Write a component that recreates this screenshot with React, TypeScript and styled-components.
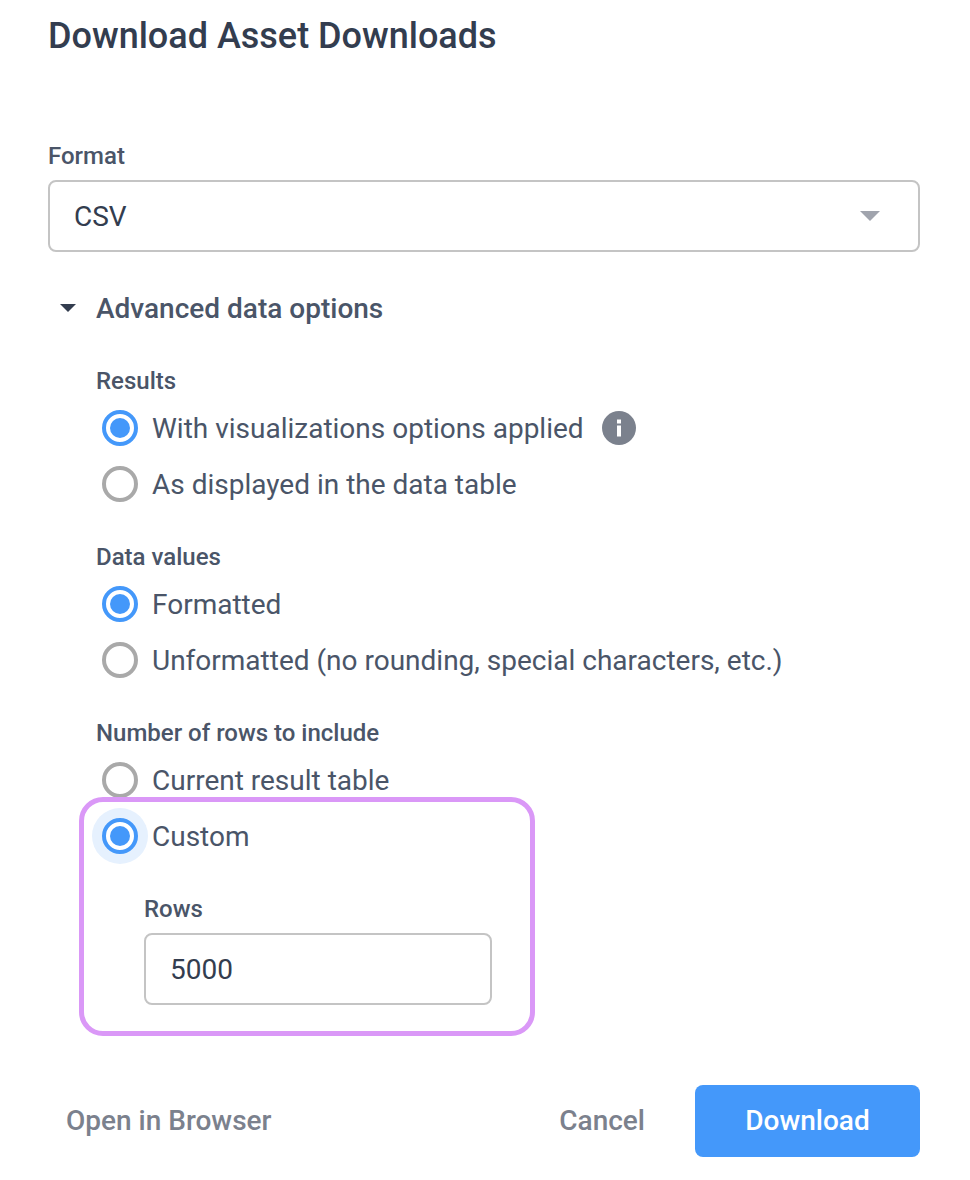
import React from 'react';
import styled, { createGlobalStyle } from 'styled-components';

const GlobalStyle = createGlobalStyle`
  html, body {
    margin: 0;
    padding: 0;
    background: #fff;
  }
  body {
    font-family: Roboto, "Liberation Sans", sans-serif;
    color: #4a5568;
  }
`;

const Page = styled.div`
  width: 970px;
  height: 1180px;
  box-sizing: border-box;
  padding: 14px 50px 0 48px;
  display: flex;
  flex-direction: column;
  overflow: hidden;
`;

const Title = styled.h1`
  margin: 0;
  font-size: 36px;
  line-height: 44px;
  font-weight: 500;
  color: #333d4f;
`;

const Label = styled.div`
  font-size: 24px;
  line-height: 32px;
  font-weight: 500;
  color: #4a5568;
`;

const FormatLabel = styled(Label)`
  margin-top: 82px;
  margin-bottom: 8px;
`;

const SelectBox = styled.div`
  height: 72px;
  box-sizing: border-box;
  border: 2px solid #c4c4c4;
  border-radius: 8px;
  padding: 0 38px 0 24px;
  display: flex;
  align-items: center;
  justify-content: space-between;
  font-size: 28px;
  color: #333d4f;
`;

const Caret = styled.span<{ $w: number; $h: number; $color: string }>`
  width: 0;
  height: 0;
  border-left: ${(p) => p.$w / 2}px solid transparent;
  border-right: ${(p) => p.$w / 2}px solid transparent;
  border-top: ${(p) => p.$h}px solid ${(p) => p.$color};
`;

const AdvancedToggle = styled.div`
  display: flex;
  align-items: center;
  gap: 20px;
  margin-top: 36px;
  padding-left: 12px;
  height: 40px;
  font-size: 28px;
  font-weight: 500;
  color: #4a5568;
`;

const Options = styled.div`
  padding-left: 48px;
  display: flex;
  flex-direction: column;
  margin-top: 37px;
`;

const Group = styled.div`
  display: flex;
  flex-direction: column;
  margin-bottom: 29px;
`;

const GroupLabel = styled(Label)`
  margin-bottom: 3px;
`;

const Row = styled.div`
  display: flex;
  align-items: center;
  height: 56px;
  font-size: 28px;
  color: #4a5568;
`;

const RadioDot = styled.span<{ $checked?: boolean; $focused?: boolean }>`
  position: relative;
  flex: none;
  width: 36px;
  height: 36px;
  box-sizing: border-box;
  margin: 0 14px 0 6px;
  border-radius: 50%;
  border: 4px solid ${(p) => (p.$checked ? '#4498fa' : '#a9a9a9')};
  background: #fff;
  box-shadow: ${(p) => (p.$focused ? '0 0 0 10px #e6f1fe' : 'none')};

  &::after {
    content: '';
    display: ${(p) => (p.$checked ? 'block' : 'none')};
    position: absolute;
    inset: 4px;
    border-radius: 50%;
    background: #4498fa;
  }
`;

const InfoIcon = styled.svg`
  margin-left: 18px;
  flex: none;
`;

const CustomBlock = styled.div`
  position: relative;
`;

const Highlight = styled.div`
  position: absolute;
  left: -17px;
  top: -11px;
  width: 456px;
  height: 239px;
  box-sizing: border-box;
  border: 5px solid #da98f7;
  border-radius: 24px;
  pointer-events: none;
`;

const RowsField = styled.div`
  margin-left: 48px;
  margin-top: 29px;
  display: flex;
  flex-direction: column;
`;

const RowsInput = styled.div`
  width: 348px;
  height: 72px;
  box-sizing: border-box;
  margin-top: 8px;
  border: 2px solid #c4c4c4;
  border-radius: 8px;
  padding-left: 24px;
  display: flex;
  align-items: center;
  font-size: 28px;
  color: #333d4f;
`;

const Footer = styled.div`
  margin-top: 51px;
  display: flex;
  align-items: center;
  height: 72px;
  padding-left: 18px;
`;

const TextButton = styled.div`
  font-size: 28px;
  font-weight: 500;
  color: #7b818d;
  padding-bottom: 2px;
`;

const CancelButton = styled(TextButton)`
  margin-left: auto;
  margin-right: 50px;
`;

const DownloadButton = styled.div`
  width: 225px;
  height: 72px;
  box-sizing: border-box;
  padding-bottom: 2px;
  border-radius: 8px;
  background: #4498fa;
  color: #fff;
  font-size: 28px;
  font-weight: 500;
  display: flex;
  align-items: center;
  justify-content: center;
`;

export default function App() {
  return (
    <>
      <GlobalStyle />
      <Page>
        <Title>Download Asset Downloads</Title>

        <FormatLabel>Format</FormatLabel>
        <SelectBox>
          CSV
          <Caret $w={20} $h={10} $color="#a0a4ad" />
        </SelectBox>

        <AdvancedToggle>
          <Caret $w={16} $h={8} $color="#333d4f" />
          Advanced data options
        </AdvancedToggle>

        <Options>
          <Group>
            <GroupLabel>Results</GroupLabel>
            <Row>
              <RadioDot $checked />
              With visualizations options applied
              <InfoIcon width="34" height="34" viewBox="0 0 34 34">
                <circle cx="17" cy="17" r="17" fill="#7b818d" />
                <rect x="15" y="14.5" width="4" height="11" fill="#fff" />
                <rect x="15" y="8.5" width="4" height="4" fill="#fff" />
              </InfoIcon>
            </Row>
            <Row>
              <RadioDot />
              As displayed in the data table
            </Row>
          </Group>

          <Group>
            <GroupLabel>Data values</GroupLabel>
            <Row>
              <RadioDot $checked />
              Formatted
            </Row>
            <Row>
              <RadioDot />
              Unformatted (no rounding, special characters, etc.)
            </Row>
          </Group>

          <Group>
            <GroupLabel>Number of rows to include</GroupLabel>
            <Row>
              <RadioDot />
              Current result table
            </Row>
            <CustomBlock>
              <Highlight />
              <Row>
                <RadioDot $checked $focused />
                Custom
              </Row>
              <RowsField>
                <Label>Rows</Label>
                <RowsInput>5000</RowsInput>
              </RowsField>
            </CustomBlock>
          </Group>
        </Options>

        <Footer>
          <TextButton>Open in Browser</TextButton>
          <CancelButton>Cancel</CancelButton>
          <DownloadButton>Download</DownloadButton>
        </Footer>
      </Page>
    </>
  );
}
